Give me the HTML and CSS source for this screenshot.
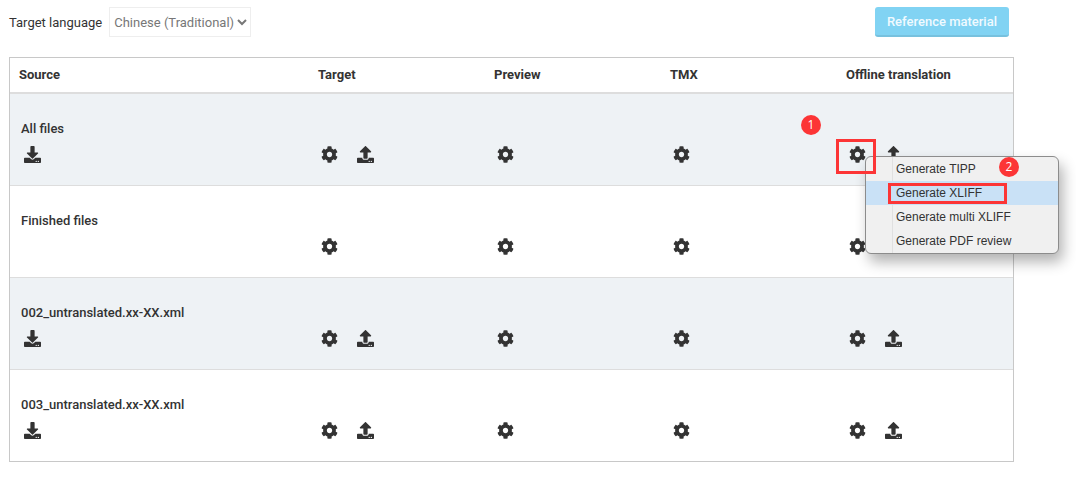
FILE: index.html
```
<!DOCTYPE html>
<html lang="en">
  <head>
    <meta charset="UTF-8" />
    <meta name="viewport" content="width=device-width, initial-scale=1.0" />
    <title>Files</title>
    <link rel="stylesheet" href="styles.css">
  </head>
  <body>
    <svg class="sprite" aria-hidden="true">
      <symbol id="cog" viewBox="0 0 512 512">
        <path d="M487.4 315.7l-42.6-24.6c4.3-23.2 4.3-47 0-70.2l42.6-24.6c4.9-2.8 7.1-8.6 5.5-14-11.1-35.6-30-67.8-54.7-94.6-3.8-4.1-10-5.1-14.8-2.3L380.8 110c-17.9-15.4-38.5-27.3-60.8-35.1V25.8c0-5.6-3.9-10.5-9.4-11.7-36.7-8.2-74.3-7.8-109.2 0-5.5 1.2-9.4 6.1-9.4 11.7V75c-22.2 7.9-42.8 19.8-60.8 35.1L88.7 85.5c-4.9-2.8-11-1.9-14.8 2.3-24.7 26.7-43.6 58.9-54.7 94.6-1.7 5.4.6 11.2 5.5 14L67.3 221c-4.3 23.2-4.3 47 0 70.2l-42.6 24.6c-4.9 2.8-7.1 8.6-5.5 14 11.1 35.6 30 67.8 54.7 94.6 3.8 4.1 10 5.1 14.8 2.3l42.6-24.6c17.9 15.4 38.5 27.3 60.8 35.1v49.2c0 5.6 3.9 10.5 9.4 11.7 36.7 8.2 74.3 7.8 109.2 0 5.5-1.2 9.4-6.1 9.4-11.7v-49.2c22.2-7.9 42.8-19.8 60.8-35.1l42.6 24.6c4.9 2.8 11 1.9 14.8-2.3 24.7-26.7 43.6-58.9 54.7-94.6 1.5-5.5-.7-11.3-5.6-14.1zM256 336c-44.1 0-80-35.9-80-80s35.9-80 80-80 80 35.9 80 80-35.9 80-80 80z" />
      </symbol>
      <symbol id="upload" viewBox="0 0 512 512">
        <path d="M296 384h-80c-13.3 0-24-10.7-24-24V192h-87.7c-17.8 0-26.7-21.5-14.1-34.1L242.3 5.7c7.5-7.5 19.8-7.5 27.3 0l152.2 152.2c12.6 12.6 3.7 34.1-14.1 34.1H320v168c0 13.3-10.7 24-24 24zm216-8v112c0 13.3-10.7 24-24 24H24c-13.3 0-24-10.7-24-24V376c0-13.3 10.7-24 24-24h136v8c0 30.9 25.1 56 56 56h80c30.9 0 56-25.1 56-56v-8h136c13.3 0 24 10.7 24 24zm-124 88c0-11-9-20-20-20s-20 9-20 20 9 20 20 20 20-9 20-20zm64 0c0-11-9-20-20-20s-20 9-20 20 9 20 20 20 20-9 20-20z" />
      </symbol>
      <symbol id="download" viewBox="0 0 512 512">
        <path d="M216 0h80c13.3 0 24 10.7 24 24v168h87.7c17.8 0 26.7 21.5 14.1 34.1L269.7 378.3c-7.5 7.5-19.8 7.5-27.3 0L90.1 226.1c-12.6-12.6-3.7-34.1 14.1-34.1H192V24c0-13.3 10.7-24 24-24zm296 376v112c0 13.3-10.7 24-24 24H24c-13.3 0-24-10.7-24-24V376c0-13.3 10.7-24 24-24h146.7l49 49c20.1 20.1 52.5 20.1 72.6 0l49-49H488c13.3 0 24 10.7 24 24zm-124 88c0-11-9-20-20-20s-20 9-20 20 9 20 20 20 20-9 20-20zm64 0c0-11-9-20-20-20s-20 9-20 20 9 20 20 20 20-9 20-20z" />
      </symbol>
    </svg>

    <div class="toolbar">
      <label for="language">Target language</label>
      <select id="language" class="language">
        <option>Chinese (Traditional)</option>
      </select>
      <button class="reference" type="button">Reference material</button>
    </div>

    <table class="files">
      <thead>
        <tr>
          <th>Source</th>
          <th class="action">Target</th>
          <th class="action">Preview</th>
          <th class="action">TMX</th>
          <th class="action">Offline translation</th>
        </tr>
      </thead>
      <tbody>
        <tr>
          <td>
            <div class="name">All files</div>
            <div class="icons">
              <button class="icon" type="button" aria-label="Download"><svg><use href="#download" /></svg></button>
            </div>
          </td>
          <td>
            <div class="icons">
              <button class="icon" type="button" aria-label="Generate"><svg><use href="#cog" /></svg></button>
              <button class="icon" type="button" aria-label="Upload"><svg><use href="#upload" /></svg></button>
            </div>
          </td>
          <td>
            <div class="icons">
              <button class="icon" type="button" aria-label="Generate"><svg><use href="#cog" /></svg></button>
            </div>
          </td>
          <td>
            <div class="icons">
              <button class="icon" type="button" aria-label="Generate"><svg><use href="#cog" /></svg></button>
            </div>
          </td>
          <td>
            <div class="icons open">
              <button class="icon" type="button" aria-label="Generate"><svg><use href="#cog" /></svg></button>
              <button class="icon" type="button" aria-label="Upload"><svg><use href="#upload" /></svg></button>
              <span class="badge step-one">1</span>
              <span class="frame frame-cog"></span>
              <div class="menu">
                <button class="item" type="button">Generate TIPP</button>
                <button class="item active" type="button">Generate XLIFF</button>
                <button class="item" type="button">Generate multi XLIFF</button>
                <button class="item" type="button">Generate PDF review</button>
                <span class="frame frame-item"></span>
                <span class="badge step-two">2</span>
              </div>
            </div>
          </td>
        </tr>
        <tr>
          <td>
            <div class="name">Finished files</div>
            <div class="icons"></div>
          </td>
          <td>
            <div class="icons">
              <button class="icon" type="button" aria-label="Generate"><svg><use href="#cog" /></svg></button>
            </div>
          </td>
          <td>
            <div class="icons">
              <button class="icon" type="button" aria-label="Generate"><svg><use href="#cog" /></svg></button>
            </div>
          </td>
          <td>
            <div class="icons">
              <button class="icon" type="button" aria-label="Generate"><svg><use href="#cog" /></svg></button>
            </div>
          </td>
          <td>
            <div class="icons">
              <button class="icon" type="button" aria-label="Generate"><svg><use href="#cog" /></svg></button>
            </div>
          </td>
        </tr>
        <tr>
          <td>
            <div class="name">002_untranslated.xx-XX.xml</div>
            <div class="icons">
              <button class="icon" type="button" aria-label="Download"><svg><use href="#download" /></svg></button>
            </div>
          </td>
          <td>
            <div class="icons">
              <button class="icon" type="button" aria-label="Generate"><svg><use href="#cog" /></svg></button>
              <button class="icon" type="button" aria-label="Upload"><svg><use href="#upload" /></svg></button>
            </div>
          </td>
          <td>
            <div class="icons">
              <button class="icon" type="button" aria-label="Generate"><svg><use href="#cog" /></svg></button>
            </div>
          </td>
          <td>
            <div class="icons">
              <button class="icon" type="button" aria-label="Generate"><svg><use href="#cog" /></svg></button>
            </div>
          </td>
          <td>
            <div class="icons">
              <button class="icon" type="button" aria-label="Generate"><svg><use href="#cog" /></svg></button>
              <button class="icon" type="button" aria-label="Upload"><svg><use href="#upload" /></svg></button>
            </div>
          </td>
        </tr>
        <tr>
          <td>
            <div class="name">003_untranslated.xx-XX.xml</div>
            <div class="icons">
              <button class="icon" type="button" aria-label="Download"><svg><use href="#download" /></svg></button>
            </div>
          </td>
          <td>
            <div class="icons">
              <button class="icon" type="button" aria-label="Generate"><svg><use href="#cog" /></svg></button>
              <button class="icon" type="button" aria-label="Upload"><svg><use href="#upload" /></svg></button>
            </div>
          </td>
          <td>
            <div class="icons">
              <button class="icon" type="button" aria-label="Generate"><svg><use href="#cog" /></svg></button>
            </div>
          </td>
          <td>
            <div class="icons">
              <button class="icon" type="button" aria-label="Generate"><svg><use href="#cog" /></svg></button>
            </div>
          </td>
          <td>
            <div class="icons">
              <button class="icon" type="button" aria-label="Generate"><svg><use href="#cog" /></svg></button>
              <button class="icon" type="button" aria-label="Upload"><svg><use href="#upload" /></svg></button>
            </div>
          </td>
        </tr>
      </tbody>
    </table>
  </body>
</html>
```
FILE: styles.css
```
body {
  margin: 0;
  padding: 7px 62px 0 9px;
  background-color: #fff;
  color: #333;
  font-family: Roboto, Arial, sans-serif;
  font-size: 13px;
}
.sprite {
  display: none;
}
.toolbar {
  display: flex;
  align-items: center;
  gap: 7px;
  margin-bottom: 20px;
  padding-right: 5px;
}
.language {
  height: 30px;
  border: 1px solid #eee;
  background-color: #fff;
  color: #777;
  font-family: Roboto, sans-serif;
  font-size: 13px;
}
.reference {
  height: 30px;
  margin-left: auto;
  padding: 0 12px;
  border: 0;
  border-bottom: 2px solid #77c1de;
  border-radius: 3px;
  background-color: #81d3f3;
  color: #f0faff;
  font-family: inherit;
  font-size: 13px;
  font-weight: 500;
}
.files {
  width: 100%;
  border: 1px solid #c8c8c8;
  border-spacing: 0;
  table-layout: fixed;
}
.files th {
  height: 32px;
  padding: 0 8px 2px 9px;
  border-bottom: 2px solid #ddd;
  font-weight: 700;
  text-align: left;
}
.files .action {
  width: 159px;
}
.files td {
  padding: 25px 11px 22px;
  border-bottom: 1px solid #ddd;
  vertical-align: bottom;
}
.files tbody tr:nth-child(odd) {
  background-color: #eef2f5;
}
.files tbody tr:last-child td {
  border-bottom: 0;
}
.name {
  margin-bottom: 7px;
  font-weight: 500;
  line-height: 20px;
}
.icons {
  display: flex;
  gap: 19px;
  height: 17px;
  padding-left: 1px;
}
td:first-child .icons {
  padding-left: 3px;
}
.icon {
  width: 17px;
  height: 17px;
  padding: 0;
  border: 0;
  background: none;
  color: #333;
  cursor: pointer;
}
.icon svg {
  display: block;
  width: 17px;
  height: 17px;
  fill: currentColor;
}
.open {
  position: relative;
}
.menu {
  position: absolute;
  top: 10px;
  left: 17px;
  z-index: 1;
  width: 192px;
  border: 1px solid #8c8c8c;
  border-radius: 6px;
  background: linear-gradient(#e0e0e0, #e0e0e0) 26px 0 / 1px 100% no-repeat #f0f0f0;
  box-shadow: 4px 8px 14px rgba(0, 0, 0, 0.3);
}
.item {
  display: block;
  width: 100%;
  height: 24px;
  padding: 0 0 0 30px;
  border: 0;
  background: none;
  color: #333;
  font-family: "Liberation Sans", Arial, sans-serif;
  font-size: 12px;
  text-align: left;
}
.item.active {
  background-color: #c9e1f6;
}
/* Step markers drawn over the menu */
.frame {
  position: absolute;
  z-index: 2;
  box-sizing: border-box;
  border: 3px solid #fc3536;
}
.frame-cog {
  top: -7px;
  left: -12px;
  width: 40px;
  height: 35px;
}
.frame-item {
  top: 26px;
  left: 22px;
  width: 119px;
  height: 21px;
}
.badge {
  position: absolute;
  width: 20px;
  height: 20px;
  border-radius: 50%;
  background-color: #fc3536;
  color: #fff;
  font-family: "Open Sans", sans-serif;
  font-size: 12px;
  line-height: 20px;
  text-align: center;
}
.step-one {
  top: -31px;
  left: -47px;
}
.step-two {
  top: 0;
  left: 133px;
}
```
